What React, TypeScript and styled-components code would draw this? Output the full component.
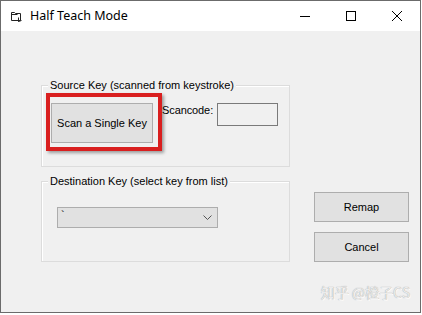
import React from "react";
import styled, { createGlobalStyle } from "styled-components";

const Global = createGlobalStyle`
  html, body { margin: 0; padding: 0; background: #ffffff; }
  body { font-family: "Liberation Sans", Arial, sans-serif; }
`;

const Window = styled.div`
  position: relative;
  width: 421px;
  height: 313px;
  box-sizing: border-box;
  border: 1px solid #6b6b6b;
  display: flex;
  flex-direction: column;
  background: #f0f0f0;
  overflow: hidden;
`;

const TitleBar = styled.div`
  height: 30px;
  flex: 0 0 30px;
  background: #ffffff;
  display: flex;
  align-items: center;
`;

const TitleIcon = styled.div`
  width: 11px;
  height: 11px;
  margin-left: 10px;
  margin-top: 1px;
  display: flex;
`;

const TitleText = styled.div`
  margin-left: 8px;
  font-family: "Noto Sans", "Open Sans", sans-serif;
  font-size: 12.5px;
  color: #000;
  flex: 1;
  line-height: 16px;
`;

const Controls = styled.div`
  display: flex;
  height: 30px;
`;

const ControlButton = styled.div`
  width: 46px;
  height: 30px;
  display: flex;
  align-items: center;
  justify-content: center;
`;

const Content = styled.div`
  flex: 1;
  display: flex;
  padding: 54px 0 0 40px;
  font-size: 11px;
  color: #000;
`;

const LeftCol = styled.div`
  width: 249px;
  display: flex;
  flex-direction: column;
  gap: 14px;
`;

const Group = styled.div<{ $h: number; $pt: number; $pl: number }>`
  position: relative;
  box-sizing: border-box;
  height: ${(p) => p.$h}px;
  border: 1px solid #dcdcdc;
  box-shadow: inset 1px 1px 0 #ffffff;
  padding: ${(p) => p.$pt}px 0 0 ${(p) => p.$pl}px;
`;

const Caption = styled.div`
  position: absolute;
  top: -7px;
  left: 6px;
  padding: 0 2px 0 2px;
  background: #f0f0f0;
  line-height: 13px;
  white-space: nowrap;
`;

const Row = styled.div`
  display: flex;
  align-items: flex-start;
`;

const ButtonWrap = styled.div`
  position: relative;
  display: flex;
`;

const Button = styled.div<{ $w: number; $h: number }>`
  box-sizing: border-box;
  width: ${(p) => p.$w}px;
  height: ${(p) => p.$h}px;
  background: #e1e1e1;
  border: 1px solid #adadad;
  display: flex;
  align-items: center;
  justify-content: center;
  line-height: 13px;
  white-space: nowrap;
`;

const Highlight = styled.div`
  position: absolute;
  top: -10px;
  left: -5px;
  width: 116px;
  height: 58px;
  box-sizing: border-box;
  border: 4px solid #d91f1f;
  box-shadow: 2px 2px 3px rgba(0, 0, 0, 0.35);
  pointer-events: none;
`;

const Label = styled.div`
  margin: 1px 0 0 9px;
  line-height: 13px;
  white-space: nowrap;
  letter-spacing: -0.1px;
`;

const TextBox = styled.div`
  box-sizing: border-box;
  width: 61px;
  height: 23px;
  margin-left: 4px;
  border: 1px solid #7a7a7a;
  background: #f0f0f0;
`;

const Combo = styled.div`
  box-sizing: border-box;
  width: 161px;
  height: 21px;
  background: #e1e1e1;
  border: 1px solid #adadad;
  display: flex;
  align-items: flex-start;
  justify-content: space-between;
  padding: 1px 5px 0 3px;
  line-height: 13px;
`;

const Chevron = styled.div`
  margin-top: 6px;
  display: flex;
`;

const RightCol = styled.div`
  margin-left: 24px;
  padding-top: 107px;
  display: flex;
  flex-direction: column;
  gap: 10px;
`;

const Watermark = styled.div`
  position: absolute;
  right: 10px;
  bottom: 10px;
  font-family: "Noto Sans CJK SC", "Noto Sans", sans-serif;
  font-size: 14px;
  color: #ececec;
  text-shadow: 0 0 1px #8c8c8c, 1px 1px 0 #ffffff;
  white-space: nowrap;
`;

export default function App() {
  return (
    <>
      <Global />
      <Window>
        <TitleBar>
          <TitleIcon>
            <svg width="11" height="11" viewBox="0 0 11 11" fill="none" stroke="#222" strokeWidth="1">
              <path d="M0.5 1.5 H3.5 L4.5 2.5 H9.5 V9.5 H0.5 Z" />
              <path d="M0.5 3.5 H6.5" />
              <path d="M7.5 6.5 V10.5 M6 9 L7.5 10.5 L10.5 9.5" />
            </svg>
          </TitleIcon>
          <TitleText>Half Teach Mode</TitleText>
          <Controls>
            <ControlButton>
              <svg width="10" height="10" viewBox="0 0 10 10">
                <path d="M0 5.5 H10" stroke="#000" strokeWidth="1" />
              </svg>
            </ControlButton>
            <ControlButton>
              <svg width="10" height="10" viewBox="0 0 10 10" fill="none">
                <rect x="0.5" y="0.5" width="9" height="9" stroke="#000" strokeWidth="1" />
              </svg>
            </ControlButton>
            <ControlButton>
              <svg width="10" height="10" viewBox="0 0 10 10">
                <path d="M0 0 L10 10 M10 0 L0 10" stroke="#000" strokeWidth="1" />
              </svg>
            </ControlButton>
          </Controls>
        </TitleBar>
        <Content>
          <LeftCol>
            <Group $h={82} $pt={17} $pl={9}>
              <Caption>Source Key (scanned from keystroke)</Caption>
              <Row>
                <ButtonWrap>
                  <Button $w={102} $h={40}>Scan a Single Key</Button>
                  <Highlight />
                </ButtonWrap>
                <Label>Scancode:</Label>
                <TextBox />
              </Row>
            </Group>
            <Group $h={81} $pt={25} $pl={15}>
              <Caption>Destination Key (select key from list)</Caption>
              <Combo>
                <span>`</span>
                <Chevron>
                  <svg width="9" height="5" viewBox="0 0 9 5" fill="none">
                    <path d="M0.5 0.5 L4.5 4.5 L8.5 0.5" stroke="#555" strokeWidth="1" />
                  </svg>
                </Chevron>
              </Combo>
            </Group>
          </LeftCol>
          <RightCol>
            <Button $w={95} $h={30}>Remap</Button>
            <Button $w={95} $h={30}>Cancel</Button>
          </RightCol>
        </Content>
        <Watermark>知乎 @橙子CS</Watermark>
      </Window>
    </>
  );
}
